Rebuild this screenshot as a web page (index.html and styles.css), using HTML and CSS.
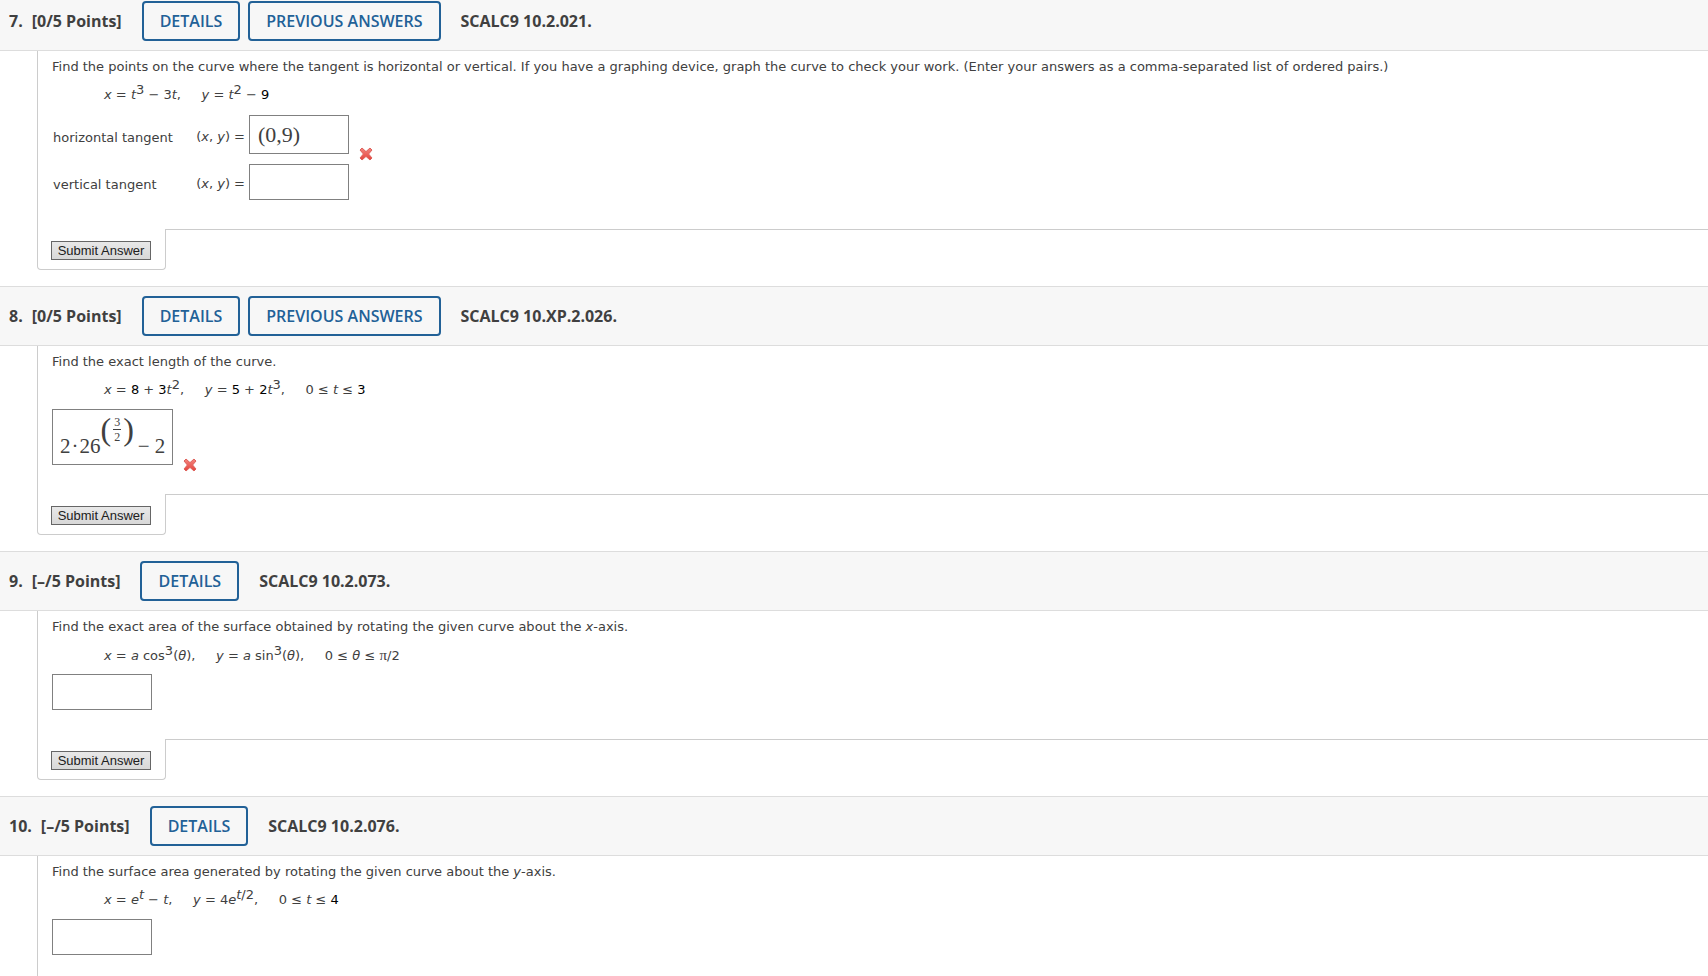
FILE: index.html
```html
<!DOCTYPE html>
<html lang="en">
<head>
    <meta charset="UTF-8">
    <meta name="viewport" content="width=device-width, initial-scale=1.0">
    <title>Parametric Curves Homework</title>
    <link rel="stylesheet" href="styles.css">
</head>
<body>
    <svg class="symbols" aria-hidden="true">
        <defs>
            <linearGradient id="red" x1="0" y1="0" x2="0" y2="1">
                <stop offset="0" stop-color="#f4857e"/>
                <stop offset="1" stop-color="#e4443d"/>
            </linearGradient>
            <symbol id="wrong" viewBox="0 0 14 14">
                <path d="M3 1 L7 4.6 L11 1 L13 3 L9.6 7 L13 11 L11 13 L7 9.4 L3 13 L1 11 L4.4 7 L1 3 Z" fill="url(#red)" stroke="#de625c" stroke-width="1" stroke-linejoin="round"/>
            </symbol>
        </defs>
    </svg>

    <section class="question">
        <header class="bar bar-first">
            <span class="number">7.</span>
            <span class="points">[0/5 Points]</span>
            <button class="btn">DETAILS</button>
            <button class="btn">PREVIOUS ANSWERS</button>
            <strong class="code">SCALC9 10.2.021.</strong>
        </header>
        <div class="content">
            <p>Find the points on the curve where the tangent is horizontal or vertical. If you have a graphing device, graph the curve to check your work. (Enter your answers as a comma-separated list of ordered pairs.)</p>
            <div class="math"><i>x</i> = <i>t</i><sup>3</sup> − 3<i>t</i>, &nbsp;&nbsp;&nbsp; <i>y</i> = <i>t</i><sup>2</sup> − <b>9</b></div>
            <div class="tangents">
                <label for="horizontal">horizontal tangent</label>
                <span class="pair">(<i>x</i>, <i>y</i>) =</span>
                <input class="answer filled" id="horizontal" type="text" value="(0,9)">
                <svg class="wrong" role="img" aria-label="incorrect"><use href="#wrong"/></svg>
                <label for="vertical">vertical tangent</label>
                <span class="pair">(<i>x</i>, <i>y</i>) =</span>
                <input class="answer" id="vertical" type="text">
            </div>
        </div>
        <div class="footer">
            <div class="tab"><button class="submit">Submit Answer</button></div>
            <div class="rule"></div>
        </div>
    </section>

    <section class="question">
        <header class="bar">
            <span class="number">8.</span>
            <span class="points">[0/5 Points]</span>
            <button class="btn">DETAILS</button>
            <button class="btn">PREVIOUS ANSWERS</button>
            <strong class="code">SCALC9 10.XP.2.026.</strong>
        </header>
        <div class="content">
            <p>Find the exact length of the curve.</p>
            <div class="math"><i>x</i> = <b>8</b> + <b>3</b><i>t</i><sup>2</sup>, &nbsp;&nbsp;&nbsp; <i>y</i> = <b>5</b> + <b>2</b><i>t</i><sup>3</sup>, &nbsp;&nbsp;&nbsp; 0 ≤ <i>t</i> ≤ <b>3</b></div>
            <div class="row">
                <div class="equation" role="textbox" tabindex="0" contenteditable="true" spellcheck="false" aria-label="Length of the curve"><span>2</span><span class="dot">·</span><span>26</span><span class="power"><span class="paren">(</span><span class="fraction"><span class="top">3</span><span class="bottom">2</span></span><span class="paren">)</span></span><span class="minus">−</span><span>2</span></div>
                <svg class="wrong" role="img" aria-label="incorrect"><use href="#wrong"/></svg>
            </div>
        </div>
        <div class="footer">
            <div class="tab"><button class="submit">Submit Answer</button></div>
            <div class="rule"></div>
        </div>
    </section>

    <section class="question">
        <header class="bar">
            <span class="number">9.</span>
            <span class="points">[–/5 Points]</span>
            <button class="btn">DETAILS</button>
            <strong class="code">SCALC9 10.2.073.</strong>
        </header>
        <div class="content">
            <p><label for="area9">Find the exact area of the surface obtained by rotating the given curve about the <i>x</i>-axis.</label></p>
            <div class="math"><i>x</i> = <i>a</i> cos<sup>3</sup>(<i>θ</i>), &nbsp;&nbsp;&nbsp; <i>y</i> = <i>a</i> sin<sup>3</sup>(<i>θ</i>), &nbsp;&nbsp;&nbsp; 0 ≤ <i>θ</i> ≤ <span class="pi">π</span>/2</div>
            <div class="row">
                <input class="answer" id="area9" type="text">
            </div>
        </div>
        <div class="footer">
            <div class="tab"><button class="submit">Submit Answer</button></div>
            <div class="rule"></div>
        </div>
    </section>

    <section class="question">
        <header class="bar">
            <span class="number">10.</span>
            <span class="points">[–/5 Points]</span>
            <button class="btn">DETAILS</button>
            <strong class="code">SCALC9 10.2.076.</strong>
        </header>
        <div class="content">
            <p><label for="area10">Find the surface area generated by rotating the given curve about the <i>y</i>-axis.</label></p>
            <div class="math"><i>x</i> = <i>e</i><sup><i>t</i></sup> − <i>t</i>, &nbsp;&nbsp;&nbsp; <i>y</i> = 4<i>e</i><sup><i>t</i>/2</sup>, &nbsp;&nbsp;&nbsp; 0 ≤ <i>t</i> ≤ <b>4</b></div>
            <div class="row">
                <input class="answer" id="area10" type="text">
            </div>
        </div>
    </section>
</body>
</html>
```
FILE: styles.css
```css
* {
    box-sizing: border-box;
}
body {
    margin: 0;
    background: #fff;
    color: #404040;
    font-family: Verdana, "DejaVu Sans", sans-serif;
    font-size: 13px;
    line-height: 20px;
    overflow: hidden;
}
.symbols {
    display: block;
    width: 0;
    height: 0;
}
.bar {
    display: flex;
    align-items: center;
    height: 60px;
    padding: 0 9px;
    background: #f7f7f7;
    border-top: 1px solid #ddd;
    border-bottom: 1px solid #ddd;
    font: bold 16px/20px "Open Sans", sans-serif;
}
.bar-first {
    height: 51px;
    padding-bottom: 9px;
    border-top: 0;
}
.points {
    margin-left: 9px;
    margin-right: 20px;
}
.btn {
    height: 40px;
    margin-right: 8px;
    padding: 0 16px;
    background: transparent;
    border: 2px solid #226197;
    border-radius: 4px;
    color: #226197;
    font: 600 16px/20px "Open Sans", sans-serif;
}
.code {
    margin-left: 12px;
    font-weight: bold;
}
.content {
    margin-left: 37px;
    padding: 6px 14px 29px;
    border-left: 1px solid #ccc;
}
.content p {
    margin: 0;
}
.math {
    height: 20px;
    margin: 8px 0 0 52px;
}
.math b {
    color: #000;
    font-weight: normal;
}
sup {
    font-size: 13px;
    line-height: 0;
    vertical-align: 5px;
}
.pi {
    font-family: "Liberation Serif", serif;
    font-size: 15px;
}
.row {
    display: flex;
    align-items: flex-start;
    margin-top: 9px;
}
.tangents {
    display: grid;
    grid-template-columns: 140px 56px 100px auto;
    row-gap: 10px;
    align-items: center;
    margin-top: 10px;
    padding-left: 1px;
}
.tangents label {
    padding-top: 6px;
}
.pair {
    padding: 4px 4px 0 0;
    text-align: right;
}
.answer {
    width: 100px;
    height: 36px;
    padding: 0 8px;
    background: #fff;
    border: 1px solid #808080;
    border-radius: 0;
    color: #404040;
    font: 22px "Liberation Serif", serif;
}
.filled {
    height: 39px;
}
.wrong {
    width: 14px;
    height: 14px;
    margin: 0 0 -7px 10px;
    align-self: end;
}
.equation {
    display: flex;
    align-items: flex-end;
    height: 56px;
    padding: 0 7px 6px;
    border: 1px solid #808080;
    font: 21px/24px "Liberation Serif", serif;
}
.dot {
    padding: 0 1px;
}
.power {
    display: flex;
    align-items: center;
    align-self: flex-start;
    padding-top: 4px;
}
.paren {
    font-size: 32px;
    line-height: 30px;
}
.fraction {
    display: flex;
    flex-direction: column;
    margin: 0 2px;
    font-size: 12px;
    line-height: 14px;
}
.top,
.bottom {
    padding: 0 1px;
}
.top {
    border-bottom: 1px solid #404040;
}
.minus {
    padding: 0 5px 0 4px;
}
.footer {
    display: flex;
    height: 57px;
    margin-left: 37px;
}
.tab {
    width: 129px;
    height: 41px;
    padding: 12px 13px;
    border: 1px solid #ccc;
    border-top: 0;
    border-radius: 0 0 4px 4px;
}
.rule {
    flex: 1;
    border-top: 1px solid #ccc;
}
.submit {
    display: block;
    width: 100px;
    height: 19px;
    padding: 0;
    background: linear-gradient(#e8e8e8, #d8d8d8);
    border: 1px solid #666;
    border-radius: 0;
    color: #202020;
    font: 13px/15px "Liberation Sans", Arial, sans-serif;
}
```
